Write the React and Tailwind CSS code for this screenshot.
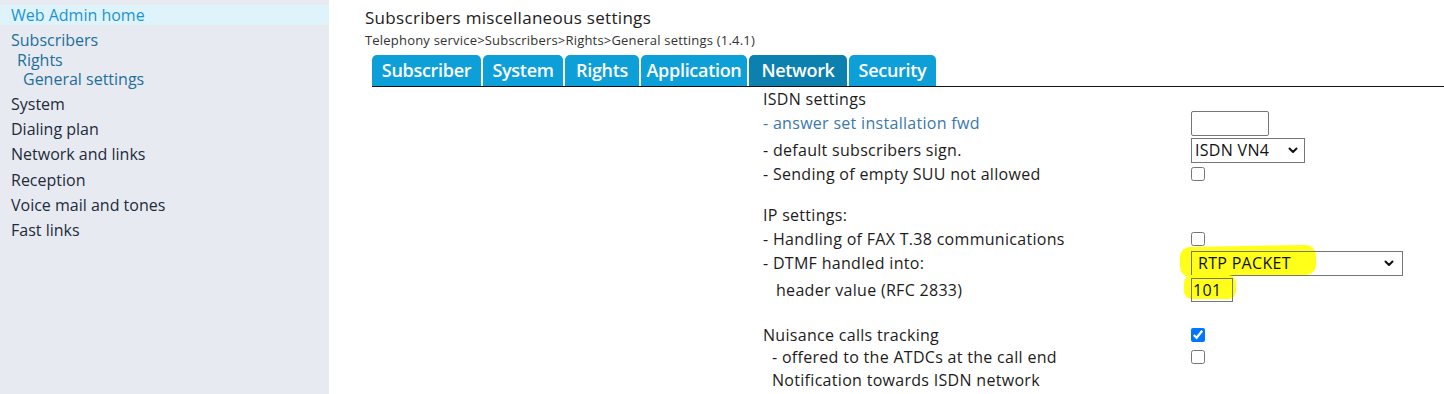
import { useState } from 'react';

const font = { fontFamily: '"Open Sans", "Liberation Sans", sans-serif' };

const tabs = [
  { name: 'Subscriber', w: 'w-[109px]' },
  { name: 'System', w: 'w-[80px]' },
  { name: 'Rights', w: 'w-[74px]' },
  { name: 'Application', w: 'w-[106px]' },
  { name: 'Network', w: 'w-[98px]' },
  { name: 'Security', w: 'w-[87px]' },
];

function Chevron() {
  return (
    <svg width="12" height="12" viewBox="0 0 24 24" fill="none" stroke="#111" strokeWidth="4" strokeLinecap="round" strokeLinejoin="round">
      <polyline points="5 9 12 16 19 9" />
    </svg>
  );
}

function Box({ checked = false }) {
  return <input type="checkbox" defaultChecked={checked} className="w-[14px] h-[14px] m-0" />;
}

function Sidebar() {
  return (
    <aside className="w-[329px] shrink-0 bg-[#e7eaf0] h-[394px] text-[16px]">
      <div className="pt-[5px]">
        <div className="h-[20px] leading-[20px] pl-[11px] bg-[#dff3fa] text-[#1b95d9]">Web Admin home</div>
      </div>
      <div className="pl-[11px] pt-[5px] text-[#1e6f9c]">
        <div className="h-[21px] leading-[21px]">Subscribers</div>
        <div className="pl-[6px] h-[19px] leading-[19px]">Rights</div>
        <div className="pl-[12px] h-[19px] leading-[19px]">General settings</div>
      </div>
      <div className="pl-[11px] pt-[3px] text-[#1d2b3c]">
        {['System', 'Dialing plan', 'Network and links', 'Reception', 'Voice mail and tones', 'Fast links'].map((t) => (
          <div key={t} className="h-[25.2px] leading-[25px]">{t}</div>
        ))}
      </div>
    </aside>
  );
}

function Row({ h, label, indent = 0, blue = false, children }) {
  return (
    <div className="flex items-center" style={{ height: h }}>
      <div className={`w-[428px] shrink-0 ${blue ? 'text-[#3a78ad]' : 'text-[#1c1c1c]'}`} style={{ paddingLeft: indent }}>
        {label}
      </div>
      <div className="flex items-center">{children}</div>
    </div>
  );
}

export default function App() {
  const [active] = useState('Network');
  return (
    <div className="flex w-[1444px] h-[394px] overflow-hidden bg-white" style={font}>
      <Sidebar />
      <main className="flex-1 pl-[36px]">
        <h1 className="pt-[7px] h-[32px] text-[17px] leading-[22px] tracking-[0.3px] text-[#222]">Subscribers miscellaneous settings</h1>
        <div className="text-[13px] leading-[16px] text-[#333] tracking-[0.2px]">Telephony service&gt;Subscribers&gt;Rights&gt;General settings (1.4.1)</div>
        <div className="ml-[7px] mt-[7px] flex gap-[2px] items-end border-b border-[#111] h-[32px]">
          {tabs.map((t) => (
            <div
              key={t.name}
              className={`${t.w} h-[31px] rounded-t-[5px] text-center text-white font-semibold text-[18px] leading-[31px] tracking-[-0.3px] ${t.name === active ? 'bg-[#0c80ae]' : 'bg-[#0d9fd8]'}`}
            >
              {t.name}
            </div>
          ))}
        </div>
        <div className="ml-[398px] text-[16px] tracking-[0.3px]">
          <Row h={24} label="ISDN settings" />
          <Row h={24} label="- answer set installation fwd" blue>
            <input type="text" className="w-[78px] h-[25px] border border-[#767676] rounded-[2px]" />
          </Row>
          <Row h={30} label="- default subscribers sign.">
            <div className="w-[114px] h-[25px] border border-[#767676] flex items-center justify-between pl-[3px] pr-[5px] text-[#111]">
              <span>ISDN VN4</span>
              <Chevron />
            </div>
          </Row>
          <Row h={18} label="- Sending of empty SUU not allowed">
            <Box />
          </Row>
          <div className="h-[20px]" />
          <Row h={24} label="IP settings:" />
          <Row h={23} label="- Handling of FAX T.38 communications">
            <Box />
          </Row>
          <Row h={26} label="- DTMF handled into:">
            <div className="relative">
              <div className="absolute left-[-11px] top-[-5px] w-[136px] h-[30px] bg-[#ffff1a] rounded-[10px] -rotate-1" />
              <div className="relative w-[212px] h-[25px] border border-[#767676] flex items-center justify-between pl-[6px] pr-[7px] text-[#111]">
                <span>RTP PACKET</span>
                <Chevron />
              </div>
            </div>
          </Row>
          <Row h={28} label="header value (RFC 2833)" indent={13}>
            <div className="relative">
              <div className="absolute left-[-7px] top-[-3px] w-[52px] h-[24px] bg-[#ffff1a] rounded-[8px]" />
              <div className="relative w-[42px] h-[24px] border border-[#767676] flex items-center pl-[1px] text-[#111]">101</div>
            </div>
          </Row>
          <div className="h-[20px]" />
          <Row h={22} label="Nuisance calls tracking">
            <Box checked />
          </Row>
          <Row h={21} label="- offered to the ATDCs at the call end" indent={9}>
            <Box />
          </Row>
          <div className="flex h-[40px]">
            <div className="w-[428px] shrink-0 pl-[9px] pt-[1px] text-[#1c1c1c]">Notification towards ISDN network</div>
            <div className="pt-[24px]"><Box /></div>
          </div>
        </div>
      </main>
    </div>
  );
}
